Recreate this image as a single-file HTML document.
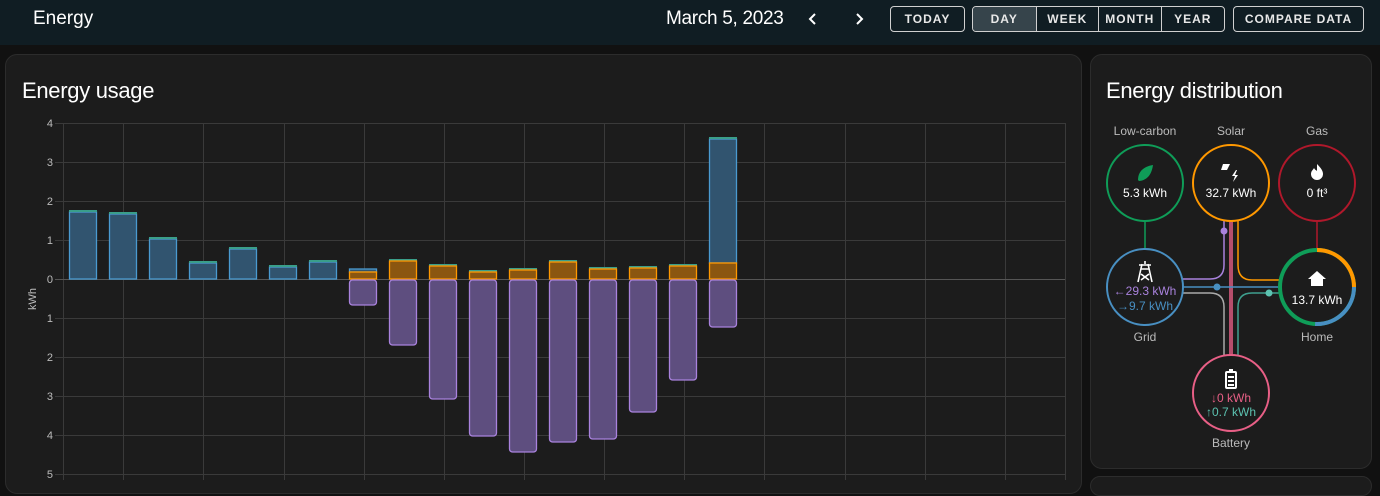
<!DOCTYPE html>
<html><head><style>
body{margin:0;width:1380px;height:480px;overflow:hidden;background:#111;font-family:"Liberation Sans",Roboto,sans-serif;color:#e1e1e1;position:relative}
.top{position:absolute;left:0;top:0;width:1380px;height:45px;background:#101d23}
.t{position:absolute;white-space:nowrap}
.btn{position:absolute;top:6px;height:24px;border:1px solid #d0d0d0;border-radius:4px;font-size:12px;font-weight:bold;letter-spacing:1px;color:#e8e8e8;display:flex;align-items:center;justify-content:center;box-sizing:border-box}
.card{position:absolute;background:#1c1c1c;border:1px solid #2c2c2c;border-radius:12px;box-sizing:border-box}
</style></head><body>
<div class="top">
<div class="t" style="left:33px;top:8px;font-size:19px;color:#fff">Energy</div>
<div class="t" style="left:666px;top:8px;font-size:19px;color:#fff;letter-spacing:-0.3px">March 5, 2023</div>
<svg class="t" style="left:805px;top:11px" width="70" height="16"><path d="M10 3l-5 5 5 5" stroke="#fff" stroke-width="2" fill="none"/><path d="M52 3l5 5-5 5" stroke="#fff" stroke-width="2" fill="none"/></svg>
<div class="btn" style="left:890px;width:75px;height:26px">TODAY</div>
<div class="btn" style="left:972px;width:253px;height:26px;justify-content:flex-start">
<span style="width:63px;height:24px;background:#36444b;display:flex;align-items:center;justify-content:center;border-right:1px solid #d0d0d0;border-radius:3px 0 0 3px">DAY</span>
<span style="width:62px;text-align:center;border-right:1px solid #d0d0d0;line-height:24px">WEEK</span>
<span style="width:62px;text-align:center;border-right:1px solid #d0d0d0;line-height:24px">MONTH</span>
<span style="width:63px;text-align:center;line-height:24px">YEAR</span></div>
<div class="btn" style="left:1233px;width:131px;height:26px">COMPARE DATA</div>
</div>
<div class="card" style="left:5px;top:54px;width:1077px;height:440px"></div>
<div class="card" style="left:1090px;top:54px;width:282px;height:415px"></div>
<div class="card" style="left:1090px;top:476px;width:282px;height:20px"></div>
<div class="t" style="left:22px;top:78px;font-size:22px;color:#fff;letter-spacing:-0.3px">Energy usage</div>
<div class="t" style="left:1106px;top:78px;font-size:22px;color:#fff;letter-spacing:-0.3px">Energy distribution</div>
<svg style="position:absolute;left:0;top:0" width="1380" height="480">
<g stroke="#3a3a3a" stroke-width="1">
<path d="M55 123.5H1065M55 162.5H1065M55 201.5H1065M55 240.5H1065M55 318.5H1065M55 357.5H1065M55 396.5H1065M55 435.5H1065M55 474.5H1065"/>
<path d="M63.5 123V480M123.5 123V480M203.5 123V480M284.5 123V480M364.5 123V480M444.5 123V480M524.5 123V480M604.5 123V480M684.5 123V480M764.5 123V480M845.5 123V480M925.5 123V480M1005.5 123V480M1065.5 123V480"/>
</g>
<path d="M55 279.5H1065" stroke="#555"/>
<g font-size="11" fill="#bbb" text-anchor="end">
<text x="53" y="127">4</text><text x="53" y="166">3</text><text x="53" y="205">2</text><text x="53" y="244">1</text><text x="53" y="283">0</text><text x="53" y="322">1</text><text x="53" y="361">2</text><text x="53" y="400">3</text><text x="53" y="439">4</text><text x="53" y="478">5</text>
</g>
<text transform="translate(36,310) rotate(-90)" font-size="11" fill="#bbb">kWh</text>
<g stroke-width="1.3">
<g fill="#31546f" stroke="#4a9ad0">
<rect x="69.5" y="212" width="27" height="67"/><rect x="109.5" y="214" width="27" height="65"/><rect x="149.5" y="239" width="27" height="40"/><rect x="189.5" y="263" width="27" height="16"/><rect x="229.5" y="249" width="27" height="30"/><rect x="269.5" y="267" width="27" height="12"/><rect x="309.5" y="262" width="27" height="17"/><rect x="349.5" y="269" width="27" height="3"/><rect x="709.5" y="139" width="27" height="124"/>
</g>
<g fill="#3a9e8a" stroke="none">
<rect x="69" y="210" width="28" height="2"/><rect x="109" y="212" width="28" height="2"/><rect x="149" y="237" width="28" height="2"/><rect x="189" y="261" width="28" height="2"/><rect x="229" y="247" width="28" height="2"/><rect x="269" y="265" width="28" height="2"/><rect x="309" y="260" width="28" height="2"/><rect x="389" y="259" width="28" height="2"/><rect x="429" y="264" width="28" height="2"/><rect x="469" y="270" width="28" height="2"/><rect x="509" y="268" width="28" height="2"/><rect x="549" y="260" width="28" height="2"/><rect x="589" y="267" width="28" height="2"/><rect x="629" y="266" width="28" height="2"/><rect x="669" y="264" width="28" height="2"/><rect x="709" y="137" width="28" height="2"/>
</g>
<g fill="#8b5610" stroke="#ff9800">
<rect x="349.5" y="272" width="27" height="7"/><rect x="389.5" y="261" width="27" height="18"/><rect x="429.5" y="266" width="27" height="13"/><rect x="469.5" y="272" width="27" height="7"/><rect x="509.5" y="270" width="27" height="9"/><rect x="549.5" y="262" width="27" height="17"/><rect x="589.5" y="269" width="27" height="10"/><rect x="629.5" y="268" width="27" height="11"/><rect x="669.5" y="266" width="27" height="13"/><rect x="709.5" y="263" width="27" height="16"/>
</g>
<g fill="#5e4e7f" stroke="#a982dd">
<rect x="349.5" y="280" width="27" height="25" rx="3"/><rect x="389.5" y="280" width="27" height="65" rx="3"/><rect x="429.5" y="280" width="27" height="119" rx="3"/><rect x="469.5" y="280" width="27" height="156" rx="3"/><rect x="509.5" y="280" width="27" height="172" rx="3"/><rect x="549.5" y="280" width="27" height="162" rx="3"/><rect x="589.5" y="280" width="27" height="159" rx="3"/><rect x="629.5" y="280" width="27" height="132" rx="3"/><rect x="669.5" y="280" width="27" height="100" rx="3"/><rect x="709.5" y="280" width="27" height="47" rx="3"/>
</g>
</g>
<g fill="none" stroke-width="1.5">
<path d="M1145 221V249" stroke="#0f9d58"/>
<path d="M1317 221V249" stroke="#b0182b"/>
<path d="M1230 221V355M1232 221V355" stroke="#e85f86"/>
<path d="M1224 221V265Q1224 279 1210 279H1183" stroke="#a982dd"/>
<path d="M1238 221V265Q1238 280 1252 280H1280" stroke="#ff9800"/>
<path d="M1183 287H1280" stroke="#488fc2"/>
<path d="M1183 293H1210Q1224 293 1224 307V355" stroke="#aaa"/>
<path d="M1238 355V307Q1238 293 1252 293H1280" stroke="#3e9f8e"/>
</g>
<circle cx="1224" cy="231" r="3.5" fill="#a982dd"/>
<circle cx="1217" cy="287" r="3.5" fill="#488fc2"/>
<circle cx="1269" cy="293" r="3.5" fill="#5cc2b0"/>
<g fill="#1c1c1c" stroke-width="2">
<circle cx="1145" cy="183" r="38" stroke="#0f9d58"/>
<circle cx="1231" cy="183" r="38" stroke="#ff9800"/>
<circle cx="1317" cy="183" r="38" stroke="#b0182b"/>
<circle cx="1145" cy="287" r="38" stroke="#488fc2"/>
<circle cx="1231" cy="393" r="38" stroke="#e85f86"/>
</g>
<circle cx="1317" cy="287" r="37" fill="#1c1c1c" stroke="#0f9d58" stroke-width="4"/>
<circle cx="1317" cy="287" r="37" fill="none" stroke="#ff9800" stroke-width="4" stroke-dasharray="58 300" transform="rotate(-90 1317 287)"/>
<circle cx="1317" cy="287" r="37" fill="none" stroke="#488fc2" stroke-width="4" stroke-dasharray="0 58 60 300" transform="rotate(-90 1317 287)"/>
<g font-size="12" fill="#bbb" text-anchor="middle">
<text x="1145" y="135">Low-carbon</text><text x="1231" y="135">Solar</text><text x="1317" y="135">Gas</text>
<text x="1145" y="341">Grid</text><text x="1317" y="341">Home</text><text x="1231" y="447">Battery</text>
</g>
<g font-size="12" fill="#fff" text-anchor="middle">
<text x="1145" y="197">5.3 kWh</text><text x="1231" y="197">32.7 kWh</text><text x="1317" y="197">0 ft³</text>
<text x="1317" y="304">13.7 kWh</text>
<text x="1145" y="295" fill="#a982dd">←29.3 kWh</text><text x="1145" y="310" fill="#488fc2">→9.7 kWh</text>
<text x="1231" y="402" fill="#e85f86">↓0 kWh</text><text x="1231" y="416" fill="#5cc2b0">↑0.7 kWh</text>
</g>
<path d="M1138 180C1138 170 1146 166 1153 165C1152 172 1149 180 1139 181Z" fill="#0f9d58"/>
<g fill="#fff"><path d="M1223 164h7l-3 6h-6z"/><path d="M1236 170l-4 6h3l-2 6 5-7h-3l2-5z"/>
<path d="M1317 164c4 4 6 7 6 10a6 6 0 0 1-12 0c0-3 2-4 3-6 1 2 2 2 3 3 0-3 0-5 0-7z"/>
<path d="M1317 271l-9 8h3v7h12v-7h3z"/>
<rect x="1226" y="372" width="10" height="16" rx="1" fill="none" stroke="#fff" stroke-width="2"/><rect x="1229" y="369" width="4" height="3"/><rect x="1228" y="376" width="6" height="2"/><rect x="1228" y="380" width="6" height="2"/><rect x="1228" y="384" width="6" height="2"/></g>
<path d="M1139 265h12M1141 269h8M1145 261v3M1142 264l-4 18M1148 264l4 18M1141 274l8 6M1149 274l-8 6" stroke="#fff" stroke-width="1.6" fill="none"/>
</svg>
</body></html>
